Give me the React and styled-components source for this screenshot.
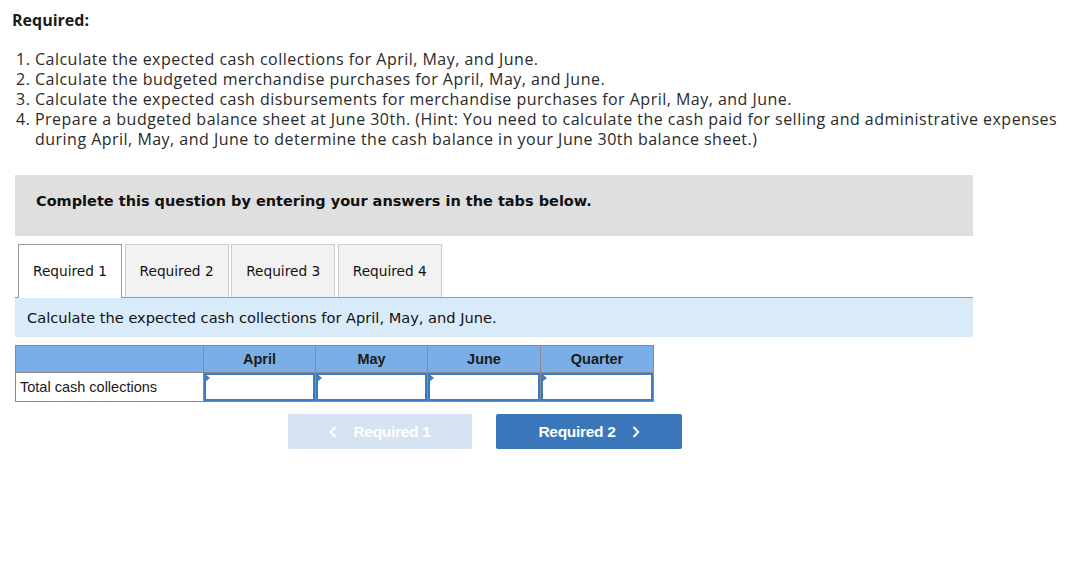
import React from 'react';
import styled, { createGlobalStyle } from 'styled-components';

const Global = createGlobalStyle`
  body {
    margin: 0;
    background: #ffffff;
    color: #222222;
    font-family: "Open Sans", Lato, sans-serif;
  }
`;

const Page = styled.div`
  padding: 10px 12px 0 12px;
`;

const Heading = styled.div`
  font-size: 16px;
  font-weight: 700;
  line-height: 20px;
  color: #1a1a1a;
`;

const List = styled.ol`
  margin: 19px 0 0 0;
  padding-left: 23px;
  font-size: 16px;
  letter-spacing: 0.48px;
  line-height: 20px;
  color: #2a2a2a;
`;

const Panel = styled.div`
  margin: 26px 0 0 3px;
  width: 958px;
  font-family: "DejaVu Sans", Verdana, sans-serif;
`;

const Prompt = styled.div`
  height: 61px;
  box-sizing: border-box;
  padding: 0 0 10px 21px;
  background: #dfdfdf;
  display: flex;
  align-items: center;
  font-size: 14.5px;
  font-weight: 700;
  color: #111;
`;

const Tabs = styled.div`
  display: flex;
  gap: 2.6px;
  margin-top: 8px;
  padding-left: 3px;
`;

const Tab = styled.div`
  box-sizing: border-box;
  width: 104px;
  height: ${p => (p.$active ? 54 : 53)}px;
  padding-bottom: ${p => (p.$active ? 1 : 0)}px;
  display: flex;
  align-items: center;
  justify-content: center;
  font-size: 13.7px;
  color: #111;
  background: ${p => (p.$active ? '#ffffff' : '#f2f2f2')};
  border: 1px solid ${p => (p.$active ? '#9a9a9a' : '#cccccc')};
  border-bottom: none;
  margin-bottom: ${p => (p.$active ? '-1px' : '0')};
  position: relative;
  z-index: ${p => (p.$active ? 1 : 0)};
`;

const Strip = styled.div`
  height: 39px;
  border-top: 1px solid #9a9a9a;
  background: #d9ebf9;
  display: flex;
  align-items: center;
  padding-left: 12px;
  font-size: 14.6px;
  color: #111;
`;

const Table = styled.table`
  margin-top: 8px;
  border-collapse: collapse;
  font-family: "Liberation Sans", Arial, sans-serif;
  font-size: 14.5px;
  color: #1a1a1a;
`;

const Head = styled.th`
  width: ${p => p.$w}px;
  height: 26px;
  padding: 0;
  background: #7aaee6;
  border: 1px solid #8a8a8a;
  font-weight: 700;
  text-align: center;
`;

const Label = styled.td`
  height: 28px;
  padding: 0 0 0 4px;
  border: 1px solid #8a8a8a;
  text-align: left;
  white-space: nowrap;
`;

const Cell = styled.td`
  padding: 0;
  border: 1px solid #8a8a8a;
  height: 28px;
`;

const InputBox = styled.div`
  position: relative;
  height: 24px;
  border: 2px solid #3f7bc2;
  background: #fff;
  &::before {
    content: '';
    position: absolute;
    left: -1px;
    top: -1px;
    border-top: 4px solid transparent;
    border-bottom: 4px solid transparent;
    border-left: 5px solid #3f7bc2;
  }
`;

const Nav = styled.div`
  display: flex;
  gap: 24px;
  margin: 12px 0 0 273px;
  font-family: "Liberation Sans", Arial, sans-serif;
`;

const NavButton = styled.button`
  width: ${p => p.$w}px;
  height: 35px;
  border: none;
  border-radius: 2px;
  background: ${p => (p.$disabled ? '#d6e3f2' : '#3a76ba')};
  color: #ffffff;
  font-family: inherit;
  font-size: 15.5px;
  font-weight: 700;
  letter-spacing: -0.3px;
  display: flex;
  align-items: center;
  justify-content: center;
  gap: 16px;
  cursor: ${p => (p.$disabled ? 'default' : 'pointer')};
`;

const Chevron = ({ dir }) => (
  <svg width="8" height="12" viewBox="0 0 8 12">
    <path
      d={dir === 'left' ? 'M6.5 1 L1.8 6 L6.5 11' : 'M1.5 1 L6.2 6 L1.5 11'}
      fill="none"
      stroke="#ffffff"
      strokeWidth="2"
    />
  </svg>
);

const items = [
  'Calculate the expected cash collections for April, May, and June.',
  'Calculate the budgeted merchandise purchases for April, May, and June.',
  'Calculate the expected cash disbursements for merchandise purchases for April, May, and June.',
  'Prepare a budgeted balance sheet at June 30th. (Hint: You need to calculate the cash paid for selling and administrative expenses during April, May, and June to determine the cash balance in your June 30th balance sheet.)',
];

const months = [
  { name: 'April', w: 111 },
  { name: 'May', w: 111 },
  { name: 'June', w: 112 },
  { name: 'Quarter', w: 112 },
];

export default function App() {
  return (
    <Page>
      <Global />
      <Heading>Required:</Heading>
      <List>
        {items.map(t => (
          <li key={t}>{t}</li>
        ))}
      </List>
      <Panel>
        <Prompt>Complete this question by entering your answers in the tabs below.</Prompt>
        <Tabs>
          {[1, 2, 3, 4].map(n => (
            <Tab key={n} $active={n === 1}>
              Required {n}
            </Tab>
          ))}
        </Tabs>
        <Strip>Calculate the expected cash collections for April, May, and June.</Strip>
        <Table>
          <thead>
            <tr>
              <Head $w={187} />
              {months.map(m => (
                <Head key={m.name} $w={m.w}>
                  {m.name}
                </Head>
              ))}
            </tr>
          </thead>
          <tbody>
            <tr>
              <Label>Total cash collections</Label>
              {months.map(m => (
                <Cell key={m.name}>
                  <InputBox />
                </Cell>
              ))}
            </tr>
          </tbody>
        </Table>
        <Nav>
          <NavButton $w={184} $disabled>
            <Chevron dir="left" />
            Required 1
          </NavButton>
          <NavButton $w={186}>
            Required 2
            <Chevron dir="right" />
          </NavButton>
        </Nav>
      </Panel>
    </Page>
  );
}
